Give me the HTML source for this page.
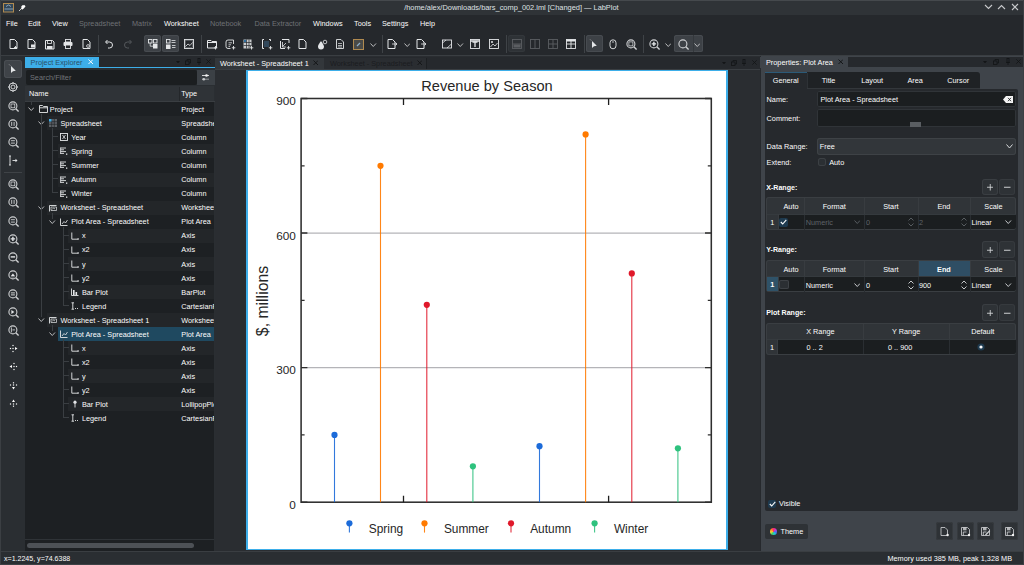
<!DOCTYPE html><html><head><meta charset="utf-8"><style>
html,body{margin:0;padding:0;width:1024px;height:565px;overflow:hidden;background:#202326;}
body{position:relative;font-family:"Liberation Sans", sans-serif;}
.b{position:absolute;}
.t{position:absolute;white-space:nowrap;}
</style></head><body>
<div class="b" style="left:0px;top:0px;width:1024px;height:15px;background:#2f3337;"></div>
<div class="b" style="left:0px;top:0px;width:1024px;height:1px;background:#45494d;"></div>
<div class="b" style="left:0px;top:0px;width:1px;height:565px;background:#3b3f43;"></div>
<svg class="b" style="left:3px;top:3px;" width="12" height="10" viewBox="0 0 12 10"><rect x="0.5" y="0.5" width="10" height="8.5" fill="#31475a" stroke="#b08a50" stroke-width="1"/><path d="M1.5 6 L10 6 M3 3.5 L5.5 2 L8 3.5" stroke="#9fb8cc" stroke-width="0.8" fill="none"/></svg>
<svg class="b" style="left:18px;top:3px;" width="8" height="9" viewBox="0 0 8 9"><path d="M3.5 6 L6.8 2.5 M4 2.8 L6 5.2" stroke="#fff" stroke-width="2.2"/><path d="M1 8 L3.5 5.5" stroke="#ddd" stroke-width="0.9"/></svg>
<div class="t" style="left:311.40px;width:400px;text-align:center;top:2.40px;line-height:12px;font-size:7.42px;color:#dfe1e3;font-weight:normal">/home/alex/Downloads/bars_comp_002.lml [Changed] — LabPlot</div>
<svg class="b" style="left:984px;top:4px;" width="9" height="6" viewBox="0 0 9 6"><path d="M1 1 L4.5 4.5 L8 1" stroke="#c8cacc" stroke-width="1.1" fill="none"/></svg>
<svg class="b" style="left:997px;top:4px;" width="9" height="6" viewBox="0 0 9 6"><path d="M1 5 L4.5 1.5 L8 5" stroke="#c8cacc" stroke-width="1.1" fill="none"/></svg>
<svg class="b" style="left:1011px;top:3px;" width="8" height="8" viewBox="0 0 8 8"><path d="M1 1 L7 7 M7 1 L1 7" stroke="#c8cacc" stroke-width="1.1"/></svg>
<div class="b" style="left:1px;top:15px;width:1023px;height:40px;background:#25282c;"></div>
<div class="t" style="left:6px;top:18.00px;line-height:12px;font-size:7.3px;color:#fcfcfc;font-weight:normal;">File</div>
<div class="t" style="left:28px;top:18.00px;line-height:12px;font-size:7.3px;color:#fcfcfc;font-weight:normal;">Edit</div>
<div class="t" style="left:52px;top:18.00px;line-height:12px;font-size:7.3px;color:#fcfcfc;font-weight:normal;">View</div>
<div class="t" style="left:79px;top:18.00px;line-height:12px;font-size:7.3px;color:#6e7175;font-weight:normal;">Spreadsheet</div>
<div class="t" style="left:132px;top:18.00px;line-height:12px;font-size:7.3px;color:#6e7175;font-weight:normal;">Matrix</div>
<div class="t" style="left:164px;top:18.00px;line-height:12px;font-size:7.3px;color:#fcfcfc;font-weight:normal;">Worksheet</div>
<div class="t" style="left:210px;top:18.00px;line-height:12px;font-size:7.3px;color:#6e7175;font-weight:normal;">Notebook</div>
<div class="t" style="left:254.5px;top:18.00px;line-height:12px;font-size:7.3px;color:#6e7175;font-weight:normal;">Data Extractor</div>
<div class="t" style="left:313px;top:18.00px;line-height:12px;font-size:7.3px;color:#fcfcfc;font-weight:normal;">Windows</div>
<div class="t" style="left:354px;top:18.00px;line-height:12px;font-size:7.3px;color:#fcfcfc;font-weight:normal;">Tools</div>
<div class="t" style="left:382px;top:18.00px;line-height:12px;font-size:7.3px;color:#fcfcfc;font-weight:normal;">Settings</div>
<div class="t" style="left:420px;top:18.00px;line-height:12px;font-size:7.3px;color:#fcfcfc;font-weight:normal;">Help</div>
<div class="b" style="left:1px;top:55px;width:1023px;height:1px;background:#3a3e42;"></div>
<svg class="b" style="left:8.5px;top:39px;" width="10" height="11" viewBox="0 0 10 11"><path d="M1 0.5 H5.5 L8 3 V9.5 H1 Z" stroke="#e4e6e8" stroke-width="1" fill="none"/><path d="M6.5 7 V10 M5 8.5 H8" stroke="#e4e6e8" stroke-width="0.9"/></svg>
<svg class="b" style="left:26.7px;top:39px;" width="10" height="11" viewBox="0 0 10 11"><path d="M1 0.5 H5.5 L8 3 V9.5 H1 Z" stroke="#e4e6e8" stroke-width="1" fill="none"/><rect x="4" y="5.5" width="4" height="3" fill="#e4e6e8"/></svg>
<svg class="b" style="left:45.0px;top:39.5px;" width="10" height="10" viewBox="0 0 10 10"><path d="M0.5 0.5 H7.5 L9 2 V9 H0.5 Z" stroke="#e4e6e8" stroke-width="1" fill="none"/><rect x="2.5" y="0.5" width="4" height="3" stroke="#e4e6e8" stroke-width="0.8" fill="none"/><rect x="2" y="6" width="5.5" height="3" fill="#e4e6e8"/></svg>
<svg class="b" style="left:63px;top:39px;" width="10" height="10" viewBox="0 0 10 10"><rect x="2.5" y="0.5" width="5" height="2.5" stroke="#e4e6e8" stroke-width="0.9" fill="none"/><rect x="0.5" y="3" width="9" height="4" rx="1" fill="#e4e6e8"/><rect x="2.5" y="6" width="5" height="3.5" stroke="#e4e6e8" stroke-width="0.9" fill="#232629"/></svg>
<svg class="b" style="left:81.7px;top:39px;" width="10" height="11" viewBox="0 0 10 11"><path d="M1 0.5 H5.5 L8 3 V9.5 H1 Z" stroke="#e4e6e8" stroke-width="1" fill="none"/><circle cx="6" cy="7" r="1.4" stroke="#e4e6e8" stroke-width="0.8" fill="none"/></svg>
<div class="b" style="left:98px;top:35px;width:1px;height:18px;background:#3f4347;"></div>
<svg class="b" style="left:103.8px;top:39px;" width="10" height="10" viewBox="0 0 10 10"><path d="M2 3 H5.5 A3 3 0 0 1 5.5 9 H4" stroke="#e4e6e8" stroke-width="1" fill="none"/><path d="M3.5 1 L1.5 3 L3.5 5" stroke="#e4e6e8" stroke-width="1" fill="none"/></svg>
<svg class="b" style="left:122.5px;top:39px;" width="10" height="10" viewBox="0 0 10 10"><path d="M8 3 H4.5 A3 3 0 0 0 4.5 9 H6" stroke="#55585c" stroke-width="1" fill="none"/><path d="M6.5 1 L8.5 3 L6.5 5" stroke="#55585c" stroke-width="1" fill="none"/></svg>
<div class="b" style="left:144px;top:35px;width:17px;height:17px;background:#3d4146;border-radius:2.5px;box-shadow:inset 0 0 0 1px #474b50;"></div>
<div class="b" style="left:162px;top:35px;width:17px;height:17px;background:#3d4146;border-radius:2.5px;box-shadow:inset 0 0 0 1px #474b50;"></div>
<svg class="b" style="left:147.5px;top:39px;" width="10" height="10" viewBox="0 0 10 10"><rect x="0.5" y="0.5" width="3.5" height="3.5" stroke="#e4e6e8" stroke-width="0.9" fill="none"/><rect x="5.5" y="0.5" width="3.5" height="3.5" stroke="#e4e6e8" stroke-width="0.9" fill="none"/><rect x="5" y="5" width="4.5" height="4.5" fill="#e4e6e8"/><path d="M2.2 4 V7.2 H5" stroke="#e4e6e8" stroke-width="0.8" fill="none"/></svg>
<svg class="b" style="left:165.5px;top:39px;" width="10" height="10" viewBox="0 0 10 10"><rect x="0.5" y="0.5" width="3.5" height="3.5" stroke="#e4e6e8" stroke-width="0.9" fill="none"/><rect x="0" y="5.5" width="4.5" height="4.5" fill="#e4e6e8"/><path d="M5.5 1.5 H9.5 M5.5 3.5 H9.5 M6 6.5 H9.5 M6 8.5 H9.5" stroke="#e4e6e8" stroke-width="0.8"/></svg>
<svg class="b" style="left:184.2px;top:39px;" width="10" height="10" viewBox="0 0 10 10"><rect x="0.5" y="0.5" width="9" height="9" stroke="#e4e6e8" stroke-width="0.9" fill="none"/><path d="M1.5 7.5 L4 5 L6 6.5 L8.5 3.5" stroke="#e4e6e8" stroke-width="0.8" fill="none"/><rect x="1.5" y="1.5" width="7" height="7" stroke="#e4e6e8" stroke-width="0.5" fill="none" opacity="0.5"/></svg>
<div class="b" style="left:200.5px;top:35px;width:1px;height:18px;background:#3f4347;"></div>
<svg class="b" style="left:206.5px;top:39px;" width="11" height="11" viewBox="0 0 11 11"><path d="M0.5 1.5 H4 L5 2.5 H9.5 V9 H0.5 Z" stroke="#e4e6e8" stroke-width="1" fill="none"/><path d="M0.5 3.5 H9.5" stroke="#e4e6e8" stroke-width="1"/><path d="M8.5 7 V10.5 M6.8 8.8 H10.3" stroke="#e4e6e8" stroke-width="0.9"/></svg>
<svg class="b" style="left:225.2px;top:39px;" width="11" height="11" viewBox="0 0 11 11"><path d="M3 1 H8.5 V5 M3 1 A2 2 0 0 0 1 3 V7.5 A2 2 0 0 0 3 9.5 H5.5" stroke="#e4e6e8" stroke-width="0.9" fill="none"/><path d="M3.5 3.8 H7 M3.5 5.8 H6 M3.5 7.6 H5" stroke="#e4e6e8" stroke-width="0.8"/><path d="M8.5 7 V10.5 M6.8 8.8 H10.3" stroke="#e4e6e8" stroke-width="0.9"/></svg>
<svg class="b" style="left:243.4px;top:39px;" width="11" height="11" viewBox="0 0 11 11"><rect x="0.5" y="0.5" width="8" height="9" fill="#c9cbcd"/><path d="M0.5 3.5 H8.5 M0.5 6.5 H8.5 M3.5 0.5 V9.5 M6 0.5 V9.5" stroke="#25282c" stroke-width="0.7"/><circle cx="2" cy="2" r="1.2" fill="#2b6ea0"/><path d="M8.5 7 V10.5 M6.8 8.8 H10.3" stroke="#25282c" stroke-width="2.2"/><path d="M8.5 7 V10.5 M6.8 8.8 H10.3" stroke="#e4e6e8" stroke-width="0.9"/></svg>
<svg class="b" style="left:261.6px;top:39px;" width="11" height="11" viewBox="0 0 11 11"><path d="M2 0.5 H0.5 V9.5 H2 M7 0.5 H8.5 V2" stroke="#e4e6e8" stroke-width="1" fill="none"/><rect x="2" y="2" width="5" height="6" fill="#31475a"/><path d="M8.5 7 V10.5 M6.8 8.8 H10.3" stroke="#e4e6e8" stroke-width="0.9"/></svg>
<svg class="b" style="left:280px;top:39px;" width="11" height="11" viewBox="0 0 11 11"><path d="M2 0.5 H9 V4 M0.5 2 V9.5 H5" stroke="#e4e6e8" stroke-width="1" fill="none"/><path d="M2.5 3 V8 H6 M3 7 L6 4" stroke="#e4e6e8" stroke-width="0.8" fill="none"/><path d="M8.5 7 V10.5 M6.8 8.8 H10.3" stroke="#e4e6e8" stroke-width="0.9"/></svg>
<svg class="b" style="left:298.2px;top:39px;" width="10" height="11" viewBox="0 0 10 11"><path d="M1 0.5 H5.5 L8 3 V9.5 H1 Z" stroke="#e4e6e8" stroke-width="1" fill="none"/></svg>
<svg class="b" style="left:316.5px;top:39px;" width="11" height="11" viewBox="0 0 11 11"><path d="M4 2 C4 2 1 6 1 7.5 A3 3 0 0 0 7 7.5 C7 6 4 2 4 2 Z" fill="#e4e6e8"/><circle cx="8" cy="3" r="1.8" stroke="#e4e6e8" stroke-width="0.8" fill="none"/></svg>
<svg class="b" style="left:335.1px;top:39px;" width="10" height="10" viewBox="0 0 10 10"><path d="M1.5 0.5 H6 L8.5 3 V9.5 H1.5 Z" stroke="#e4e6e8" stroke-width="0.9" fill="none"/><path d="M3 4.5 H7 M3 6.5 H7 M3 8 H7" stroke="#e4e6e8" stroke-width="0.7"/></svg>
<svg class="b" style="left:353.2px;top:38.5px;" width="11" height="11" viewBox="0 0 11 11"><rect x="0.5" y="0.5" width="10" height="10" fill="#494a48" stroke="#b08a50" stroke-width="1"/><path d="M4 7 L7 4" stroke="#8faec9" stroke-width="1.3"/></svg>
<svg class="b" style="left:370.05px;top:42.5px;" width="6.5" height="4" viewBox="0 0 6.5 4"><path d="M0.5 0.5 L3.25 3.5 L6.0 0.5" stroke="#c8cacc" stroke-width="0.9" fill="none"/></svg>
<div class="b" style="left:381.5px;top:35px;width:1px;height:18px;background:#3f4347;"></div>
<svg class="b" style="left:387px;top:39px;" width="11" height="11" viewBox="0 0 11 11"><path d="M1 0.5 H5.5 L8 3 V9.5 H1 Z" stroke="#e4e6e8" stroke-width="1" fill="none"/><path d="M5 5 H10 M8.5 3.5 L10 5 L8.5 6.5" stroke="#e4e6e8" stroke-width="0.8" fill="none"/></svg>
<svg class="b" style="left:403.55px;top:42.5px;" width="6.5" height="4" viewBox="0 0 6.5 4"><path d="M0.5 0.5 L3.25 3.5 L6.0 0.5" stroke="#c8cacc" stroke-width="0.9" fill="none"/></svg>
<svg class="b" style="left:416.4px;top:39px;" width="11" height="11" viewBox="0 0 11 11"><path d="M1 0.5 H5.5 L8 3 V9.5 H1 Z" stroke="#e4e6e8" stroke-width="1" fill="none"/><path d="M5 5 H10 M8.5 3.5 L10 5 L8.5 6.5" stroke="#e4e6e8" stroke-width="0.8" fill="none"/></svg>
<svg class="b" style="left:441.6px;top:39px;" width="11" height="11" viewBox="0 0 11 11"><rect x="0.5" y="1" width="9" height="8" stroke="#e4e6e8" stroke-width="0.9" fill="none"/><path d="M0.5 4 L4 1 M5 9 L9.5 5" stroke="#e4e6e8" stroke-width="0.8"/></svg>
<svg class="b" style="left:457.25px;top:42.5px;" width="6.5" height="4" viewBox="0 0 6.5 4"><path d="M0.5 0.5 L3.25 3.5 L6.0 0.5" stroke="#c8cacc" stroke-width="0.9" fill="none"/></svg>
<svg class="b" style="left:470px;top:39px;" width="11" height="11" viewBox="0 0 11 11"><rect x="0.5" y="0.5" width="9" height="9" stroke="#e4e6e8" stroke-width="0.9" fill="none"/><path d="M2.5 3 H7.5 M5 3 V8" stroke="#e4e6e8" stroke-width="1.3"/><path d="M0.5 2 H9.5" stroke="#e4e6e8" stroke-width="1.5"/></svg>
<svg class="b" style="left:488.6px;top:39px;" width="11" height="11" viewBox="0 0 11 11"><rect x="0.5" y="0.5" width="9" height="9" stroke="#e4e6e8" stroke-width="0.9" fill="none"/><path d="M1.5 8 L4 5 L6 7 L8.5 4" stroke="#e4e6e8" stroke-width="0.8" fill="none"/><circle cx="3" cy="3" r="1" fill="#e4e6e8"/></svg>
<div class="b" style="left:506px;top:35px;width:1px;height:18px;background:#3f4347;"></div>
<div class="b" style="left:508px;top:35px;width:17px;height:17px;background:#2e3236;border-radius:2.5px;box-shadow:inset 0 0 0 1px #33373b;"></div>
<svg class="b" style="left:511.5px;top:39px;" width="11" height="11" viewBox="0 0 11 11"><rect x="0.5" y="0.5" width="9" height="9" stroke="#5b5e62" stroke-width="0.9" fill="none"/><path d="M0.5 5 H9.5" stroke="#5b5e62" stroke-width="0.9"/><rect x="1.5" y="5.5" width="7" height="3" fill="#5b5e62"/></svg>
<svg class="b" style="left:529.5px;top:39px;" width="11" height="11" viewBox="0 0 11 11"><rect x="0.5" y="0.5" width="9" height="9" stroke="#5b5e62" stroke-width="0.9" fill="none"/><path d="M5 0.5 V9.5" stroke="#5b5e62" stroke-width="0.9"/></svg>
<svg class="b" style="left:547.6px;top:39px;" width="11" height="11" viewBox="0 0 11 11"><rect x="0.5" y="0.5" width="9" height="9" stroke="#5b5e62" stroke-width="0.9" fill="none"/><path d="M5 0.5 V9.5 M0.5 5 H9.5" stroke="#5b5e62" stroke-width="0.9"/></svg>
<svg class="b" style="left:566.2px;top:39px;" width="11" height="11" viewBox="0 0 11 11"><rect x="0.5" y="0.5" width="9" height="9" stroke="#e4e6e8" stroke-width="0.9" fill="none"/><path d="M5 0.5 V9.5 M0.5 5 H9.5" stroke="#e4e6e8" stroke-width="0.9"/><rect x="0.5" y="0.5" width="9" height="2" fill="#e4e6e8"/></svg>
<div class="b" style="left:583.7px;top:35px;width:1px;height:18px;background:#3f4347;"></div>
<div class="b" style="left:586px;top:35px;width:17px;height:17px;background:#3d4146;border-radius:2.5px;box-shadow:inset 0 0 0 1px #474b50;"></div>
<svg class="b" style="left:589.3px;top:39px;" width="11" height="11" viewBox="0 0 11 11"><path d="M3 2 L3 9 L5 7.3 L7.8 6.8 Z" fill="#e4e6e8"/><path d="M1.2 0.5 L2.2 1.5" stroke="#e4e6e8" stroke-width="0.6"/></svg>
<svg class="b" style="left:607.6px;top:39px;" width="11" height="11" viewBox="0 0 11 11"><rect x="2" y="0.8" width="6" height="9" rx="3" stroke="#e4e6e8" stroke-width="0.9" fill="none"/><path d="M5 2 V4" stroke="#e4e6e8" stroke-width="0.8"/></svg>
<svg class="b" style="left:626.3000000000001px;top:39.1px;" width="12" height="12" viewBox="0 0 12 12"><circle cx="4.9" cy="4.9" r="4.0" stroke="#cfd1d3" stroke-width="1.1" fill="none"/><path d="M7.8 7.8 L10.6 10.6" stroke="#cfd1d3" stroke-width="1.4"/><g transform="translate(0.4 0.4)"><rect x="2.5" y="2.5" width="4" height="4" stroke="#e4e6e8" stroke-width="0.7" fill="none"/></g></svg>
<div class="b" style="left:642.9px;top:35px;width:1px;height:18px;background:#3f4347;"></div>
<svg class="b" style="left:649.1px;top:39.1px;" width="12" height="12" viewBox="0 0 12 12"><circle cx="4.9" cy="4.9" r="4.0" stroke="#cfd1d3" stroke-width="1.1" fill="none"/><path d="M7.8 7.8 L10.6 10.6" stroke="#cfd1d3" stroke-width="1.4"/><g transform="translate(0.4 0.4)"><path d="M4.5 2.3 V6.7 M2.3 4.5 H6.7" stroke="#e4e6e8" stroke-width="1.4"/></g></svg>
<svg class="b" style="left:664.65px;top:42.5px;" width="6.5" height="4" viewBox="0 0 6.5 4"><path d="M0.5 0.5 L3.25 3.5 L6.0 0.5" stroke="#c8cacc" stroke-width="0.9" fill="none"/></svg>
<div class="b" style="left:674px;top:35px;width:28.5px;height:17px;background:#3d4146;border-radius:2.5px;box-shadow:inset 0 0 0 1px #474b50;"></div>
<div class="b" style="left:692.5px;top:35px;width:1px;height:17px;background:#34383c;"></div>
<svg class="b" style="left:678.4px;top:39.1px;" width="12" height="12" viewBox="0 0 12 12"><circle cx="4.9" cy="4.9" r="4.0" stroke="#cfd1d3" stroke-width="1.1" fill="none"/><path d="M7.8 7.8 L10.6 10.6" stroke="#cfd1d3" stroke-width="1.4"/><g transform="translate(0.4 0.4)"></g></svg>
<svg class="b" style="left:693.75px;top:42.5px;" width="6.5" height="4" viewBox="0 0 6.5 4"><path d="M0.5 0.5 L3.25 3.5 L6.0 0.5" stroke="#c8cacc" stroke-width="0.9" fill="none"/></svg>
<div class="b" style="left:1px;top:56px;width:1023px;height:495px;background:#2a2e32;"></div>
<div class="b" style="left:4px;top:60px;width:18px;height:17.5px;background:#3f4348;border-radius:3px;box-shadow:inset 0 0 0 1px #4a4e53;"></div>
<svg class="b" style="left:8px;top:64px;" width="11" height="11" viewBox="0 0 11 11"><path d="M3 2 L3 9 L5 7.3 L7.8 6.8 Z" fill="#e4e6e8"/><path d="M1.2 0.5 L2.2 1.5" stroke="#e4e6e8" stroke-width="0.6"/></svg>
<svg class="b" style="left:8px;top:82.2px;" width="11" height="11" viewBox="0 0 11 11"><circle cx="5" cy="5" r="4" stroke="#e4e6e8" stroke-width="0.9" fill="none"/><circle cx="5" cy="5" r="2" stroke="#e4e6e8" stroke-width="0.9" fill="none"/><path d="M5 0 V2 M5 8 V10 M0 5 H2 M8 5 H10" stroke="#e4e6e8" stroke-width="0.9"/></svg>
<svg class="b" style="left:8.1px;top:101.39999999999999px;" width="12" height="12" viewBox="0 0 12 12"><circle cx="4.9" cy="4.9" r="4.0" stroke="#cfd1d3" stroke-width="1.1" fill="none"/><path d="M7.8 7.8 L10.6 10.6" stroke="#cfd1d3" stroke-width="1.4"/><g transform="translate(0.4 0.4)"><rect x="2.6" y="2.6" width="3.8" height="3.8" stroke="#e4e6e8" stroke-width="0.7" fill="none"/></g></svg>
<svg class="b" style="left:8.1px;top:119.1px;" width="12" height="12" viewBox="0 0 12 12"><circle cx="4.9" cy="4.9" r="4.0" stroke="#cfd1d3" stroke-width="1.1" fill="none"/><path d="M7.8 7.8 L10.6 10.6" stroke="#cfd1d3" stroke-width="1.4"/><g transform="translate(0.4 0.4)"><path d="M3.3 2.5 V6.5 M5.7 2.5 V6.5" stroke="#e4e6e8" stroke-width="0.8"/></g></svg>
<svg class="b" style="left:8.1px;top:137.1px;" width="12" height="12" viewBox="0 0 12 12"><circle cx="4.9" cy="4.9" r="4.0" stroke="#cfd1d3" stroke-width="1.1" fill="none"/><path d="M7.8 7.8 L10.6 10.6" stroke="#cfd1d3" stroke-width="1.4"/><g transform="translate(0.4 0.4)"><path d="M2.5 3.3 H6.5 M2.5 5.7 H6.5" stroke="#e4e6e8" stroke-width="0.8"/></g></svg>
<svg class="b" style="left:8px;top:155px;" width="11" height="11" viewBox="0 0 11 11"><path d="M2 1 V10 M1 1 H3 M1 10 H3" stroke="#e4e6e8" stroke-width="0.9"/><path d="M4.5 5.5 H9" stroke="#e4e6e8" stroke-width="0.9"/><path d="M7.5 3.8 L9.5 5.5 L7.5 7.2 Z" fill="#e4e6e8"/></svg>
<div class="b" style="left:4px;top:171.5px;width:18px;height:1px;background:#3f4347;"></div>
<svg class="b" style="left:8.1px;top:178.9px;" width="12" height="12" viewBox="0 0 12 12"><circle cx="4.9" cy="4.9" r="4.0" stroke="#cfd1d3" stroke-width="1.1" fill="none"/><path d="M7.8 7.8 L10.6 10.6" stroke="#cfd1d3" stroke-width="1.4"/><g transform="translate(0.4 0.4)"><rect x="2.6" y="2.6" width="3.8" height="3.8" stroke="#e4e6e8" stroke-width="0.7" fill="none"/></g></svg>
<svg class="b" style="left:8.1px;top:197.1px;" width="12" height="12" viewBox="0 0 12 12"><circle cx="4.9" cy="4.9" r="4.0" stroke="#cfd1d3" stroke-width="1.1" fill="none"/><path d="M7.8 7.8 L10.6 10.6" stroke="#cfd1d3" stroke-width="1.4"/><g transform="translate(0.4 0.4)"><path d="M3.3 2.5 V6.5 M5.7 2.5 V6.5" stroke="#e4e6e8" stroke-width="0.8"/></g></svg>
<svg class="b" style="left:8.1px;top:215.5px;" width="12" height="12" viewBox="0 0 12 12"><circle cx="4.9" cy="4.9" r="4.0" stroke="#cfd1d3" stroke-width="1.1" fill="none"/><path d="M7.8 7.8 L10.6 10.6" stroke="#cfd1d3" stroke-width="1.4"/><g transform="translate(0.4 0.4)"><path d="M2.5 3.3 H6.5 M2.5 5.7 H6.5" stroke="#e4e6e8" stroke-width="0.8"/></g></svg>
<svg class="b" style="left:8.1px;top:233.6px;" width="12" height="12" viewBox="0 0 12 12"><circle cx="4.9" cy="4.9" r="4.0" stroke="#cfd1d3" stroke-width="1.1" fill="none"/><path d="M7.8 7.8 L10.6 10.6" stroke="#cfd1d3" stroke-width="1.4"/><g transform="translate(0.4 0.4)"><path d="M4.5 2.3 V6.7 M2.3 4.5 H6.7" stroke="#e4e6e8" stroke-width="1.4"/></g></svg>
<svg class="b" style="left:8.1px;top:251.9px;" width="12" height="12" viewBox="0 0 12 12"><circle cx="4.9" cy="4.9" r="4.0" stroke="#cfd1d3" stroke-width="1.1" fill="none"/><path d="M7.8 7.8 L10.6 10.6" stroke="#cfd1d3" stroke-width="1.4"/><g transform="translate(0.4 0.4)"><path d="M2.3 4.5 H6.7" stroke="#e4e6e8" stroke-width="1.4"/></g></svg>
<svg class="b" style="left:8.1px;top:270.1px;" width="12" height="12" viewBox="0 0 12 12"><circle cx="4.9" cy="4.9" r="4.0" stroke="#cfd1d3" stroke-width="1.1" fill="none"/><path d="M7.8 7.8 L10.6 10.6" stroke="#cfd1d3" stroke-width="1.4"/><g transform="translate(0.4 0.4)"><path d="M2.5 5.5 L4.5 3 L6.5 5.5 Z" fill="#e4e6e8"/><path d="M2.5 6.5 H6.5" stroke="#e4e6e8" stroke-width="0.6"/></g></svg>
<svg class="b" style="left:8.1px;top:288.70000000000005px;" width="12" height="12" viewBox="0 0 12 12"><circle cx="4.9" cy="4.9" r="4.0" stroke="#cfd1d3" stroke-width="1.1" fill="none"/><path d="M7.8 7.8 L10.6 10.6" stroke="#cfd1d3" stroke-width="1.4"/><g transform="translate(0.4 0.4)"><path d="M2.5 3.5 H6.5 M2.5 5.5 H6.5" stroke="#e4e6e8" stroke-width="0.9"/></g></svg>
<svg class="b" style="left:8.1px;top:306.90000000000003px;" width="12" height="12" viewBox="0 0 12 12"><circle cx="4.9" cy="4.9" r="4.0" stroke="#cfd1d3" stroke-width="1.1" fill="none"/><path d="M7.8 7.8 L10.6 10.6" stroke="#cfd1d3" stroke-width="1.4"/><g transform="translate(0.4 0.4)"><path d="M3 2.5 L6 4.5 L3 6.5 Z" fill="#e4e6e8"/></g></svg>
<svg class="b" style="left:8.1px;top:324.70000000000005px;" width="12" height="12" viewBox="0 0 12 12"><circle cx="4.9" cy="4.9" r="4.0" stroke="#cfd1d3" stroke-width="1.1" fill="none"/><path d="M7.8 7.8 L10.6 10.6" stroke="#cfd1d3" stroke-width="1.4"/><g transform="translate(0.4 0.4)"><path d="M3 2 V7 M4 4.5 H6.5" stroke="#e4e6e8" stroke-width="0.8"/></g></svg>
<svg class="b" style="left:8.5px;top:343.7px;" width="9" height="9" viewBox="0 0 9 9"><rect x="3.4" y="0.9" width="1.2" height="1.2" fill="#fcfcfc"/><rect x="3.4" y="3.9" width="1.2" height="1.2" fill="#fcfcfc"/><rect x="3.4" y="6.9" width="1.2" height="1.2" fill="#fcfcfc"/><rect x="0.9" y="3.9" width="1.2" height="1.2" fill="#fcfcfc"/><path d="M6 3 L8.5 4.5 L6 6 Z" fill="#fcfcfc"/></svg>
<svg class="b" style="left:8.5px;top:362.3px;" width="9" height="9" viewBox="0 0 9 9"><rect x="4.4" y="0.9" width="1.2" height="1.2" fill="#fcfcfc"/><rect x="4.4" y="3.9" width="1.2" height="1.2" fill="#fcfcfc"/><rect x="4.4" y="6.9" width="1.2" height="1.2" fill="#fcfcfc"/><rect x="6.9" y="3.9" width="1.2" height="1.2" fill="#fcfcfc"/><path d="M3 3 L0.5 4.5 L3 6 Z" fill="#fcfcfc"/></svg>
<svg class="b" style="left:8.5px;top:381.5px;" width="9" height="9" viewBox="0 0 9 9"><rect x="0.9" y="2.4" width="1.2" height="1.2" fill="#fcfcfc"/><rect x="3.9" y="2.4" width="1.2" height="1.2" fill="#fcfcfc"/><rect x="6.9" y="2.4" width="1.2" height="1.2" fill="#fcfcfc"/><rect x="3.9" y="0.20000000000000007" width="1.2" height="1.2" fill="#fcfcfc"/><path d="M3 5 L4.5 7.5 L6 5 Z" fill="#fcfcfc"/></svg>
<svg class="b" style="left:8.5px;top:397.8px;" width="9" height="9" viewBox="0 0 9 9"><rect x="0.9" y="5.4" width="1.2" height="1.2" fill="#fcfcfc"/><rect x="3.9" y="5.4" width="1.2" height="1.2" fill="#fcfcfc"/><rect x="6.9" y="5.4" width="1.2" height="1.2" fill="#fcfcfc"/><rect x="3.9" y="7.6" width="1.2" height="1.2" fill="#fcfcfc"/><path d="M3 4 L4.5 1.5 L6 4 Z" fill="#fcfcfc"/></svg>
<div class="b" style="left:25px;top:56px;width:190px;height:12px;background:#26292d;"></div>
<div class="b" style="left:25px;top:57px;width:73.75px;height:10.5px;background:#3daee9;"></div>
<div class="t" style="left:30.6px;top:56.70px;line-height:12px;font-size:7.3px;color:#2c4f66;font-weight:normal;">Project Explorer</div>
<svg class="b" style="left:87.5px;top:59.3px;" width="5.5" height="5.5" viewBox="0 0 5.5 5.5"><path d="M0.5 0.5 L5 5 M5 0.5 L0.5 5" stroke="#eef8fd" stroke-width="1"/></svg>
<div class="b" style="left:25px;top:67px;width:190px;height:1px;background:#3daee9;"></div>
<svg class="b" style="left:175.7px;top:60.5px;" width="4" height="2.5" viewBox="0 0 4 2.5"><path d="M0 0 H4 L2 2.5 Z" fill="#131517"/></svg>
<svg class="b" style="left:184.5px;top:58.5px;" width="6" height="6" viewBox="0 0 6 6"><rect x="0.5" y="2" width="3.5" height="3.5" stroke="#131517" stroke-width="0.8" fill="none"/><path d="M2 2 V0.5 H5.5 V4 H4" stroke="#131517" stroke-width="0.8" fill="none"/></svg>
<svg class="b" style="left:196.5px;top:58.0px;" width="4" height="7" viewBox="0 0 4 7"><rect x="1" y="0.5" width="2" height="3.8" stroke="#131517" stroke-width="0.8" fill="none"/><path d="M0 4.5 H4 M2 4.5 V7" stroke="#131517" stroke-width="0.8"/></svg>
<svg class="b" style="left:205.5px;top:59.0px;" width="5" height="5" viewBox="0 0 5 5"><path d="M0.3 0.3 L4.7 4.7 M4.7 0.3 L0.3 4.7" stroke="#131517" stroke-width="0.8"/></svg>
<div class="b" style="left:26px;top:69.5px;width:170.5px;height:15.3px;background:#1b1e20;border-radius:2px;"></div>
<div class="t" style="left:30px;top:71.90px;line-height:12px;font-size:7.3px;color:#71757a;font-weight:normal;">Search/Filter</div>
<div class="b" style="left:197px;top:69.5px;width:17.5px;height:15.5px;background:#3b4045;"></div>
<svg class="b" style="left:201px;top:72px;" width="9" height="10" viewBox="0 0 9 10"><path d="M1 3.5 H8" stroke="#e8e8e8" stroke-width="0.9"/><path d="M1 7.2 H8" stroke="#a8aaac" stroke-width="0.8"/><circle cx="5.5" cy="3.5" r="1.3" fill="#f4f4f4"/><circle cx="2.8" cy="7.2" r="1.3" fill="#c8cacc"/></svg>
<div class="b" style="left:25px;top:85.7px;width:189px;height:453px;background:#1d2023;"></div>
<div class="b" style="left:25px;top:85.7px;width:189px;height:15.7px;background:#2f3337;"></div>
<div class="b" style="left:178.8px;top:86.5px;width:1px;height:15px;background:#24272a;"></div>
<div class="b" style="left:25px;top:101.4px;width:189.5px;height:1px;background:#3a3e42;"></div>
<div class="t" style="left:29px;top:88.20px;line-height:12px;font-size:7.3px;color:#fcfcfc;font-weight:normal;">Name</div>
<div class="t" style="left:181.3px;top:88.20px;line-height:12px;font-size:7.3px;color:#fcfcfc;font-weight:normal;">Type</div>
<svg class="b" style="left:27.75px;top:107.275px;" width="6.5" height="4" viewBox="0 0 6.5 4"><path d="M0.5 0.5 L3.25 3.5 L6.0 0.5" stroke="#c8cacc" stroke-width="0.9" fill="none"/></svg>
<svg class="b" style="left:38.5px;top:105.275px;" width="9" height="8" viewBox="0 0 9 8"><path d="M0.5 0.5 H3.5 L4.5 1.5 H8.5 V7.5 H0.5 Z" stroke="#e4e6e8" stroke-width="0.9" fill="none"/><path d="M0.5 2.8 H8.5" stroke="#e4e6e8" stroke-width="0.9"/></svg>
<div class="t" style="left:49.8px;top:103.98px;line-height:12px;font-size:7.3px;color:#fcfcfc;font-weight:normal;">Project</div>
<div class="b" style="left:179px;top:102.25px;width:35px;height:14.05px;overflow:hidden;"><div class="t" style="left:2.3px;top:1.73px;line-height:12px;font-size:7.3px;color:#fcfcfc">Project</div></div>
<div class="b" style="left:47.0px;top:116.3px;width:167.3px;height:14.05px;background:#232629;"></div>
<svg class="b" style="left:38.45px;top:121.325px;" width="6.5" height="4" viewBox="0 0 6.5 4"><path d="M0.5 0.5 L3.25 3.5 L6.0 0.5" stroke="#c8cacc" stroke-width="0.9" fill="none"/></svg>
<svg class="b" style="left:49.2px;top:119.325px;" width="8" height="8" viewBox="0 0 8 8"><rect x="0" y="0" width="8" height="8" fill="#5e6266"/><path d="M0 2.7 H8 M0 5.3 H8 M2.7 0 V8 M5.3 0 V8" stroke="#1d2023" stroke-width="0.6"/><rect x="0" y="0" width="2.5" height="2.5" fill="#3daee9"/></svg>
<div class="t" style="left:60.5px;top:118.03px;line-height:12px;font-size:7.3px;color:#fcfcfc;font-weight:normal;">Spreadsheet</div>
<div class="b" style="left:179px;top:116.30px;width:35px;height:14.05px;overflow:hidden;"><div class="t" style="left:2.3px;top:1.73px;line-height:12px;font-size:7.3px;color:#fcfcfc">Spreadsheet</div></div>
<svg class="b" style="left:59.9px;top:133.375px;" width="8" height="8" viewBox="0 0 8 8"><rect x="0.5" y="0.5" width="7" height="7" stroke="#e4e6e8" stroke-width="0.9" fill="none"/><path d="M2.5 2 L5.5 6 M5.5 2 L2.5 6" stroke="#e4e6e8" stroke-width="0.8"/></svg>
<div class="t" style="left:71.19999999999999px;top:132.07px;line-height:12px;font-size:7.3px;color:#fcfcfc;font-weight:normal;">Year</div>
<div class="b" style="left:179px;top:130.35px;width:35px;height:14.05px;overflow:hidden;"><div class="t" style="left:2.3px;top:1.73px;line-height:12px;font-size:7.3px;color:#fcfcfc">Column</div></div>
<div class="b" style="left:57.7px;top:144.4px;width:156.6px;height:14.05px;background:#232629;"></div>
<svg class="b" style="left:59.9px;top:147.425px;" width="8" height="8" viewBox="0 0 8 8"><path d="M0.5 1 H6 M0.5 2.8 H4 M0.5 4.6 H6 M0.5 6.4 H4" stroke="#e4e6e8" stroke-width="0.9"/><rect x="6" y="6.5" width="1.3" height="1.3" fill="#e4e6e8"/><path d="M0.6 0.5 V7" stroke="#e4e6e8" stroke-width="0.8"/></svg>
<div class="t" style="left:71.19999999999999px;top:146.12px;line-height:12px;font-size:7.3px;color:#fcfcfc;font-weight:normal;">Spring</div>
<div class="b" style="left:179px;top:144.40px;width:35px;height:14.05px;overflow:hidden;"><div class="t" style="left:2.3px;top:1.73px;line-height:12px;font-size:7.3px;color:#fcfcfc">Column</div></div>
<svg class="b" style="left:59.9px;top:161.475px;" width="8" height="8" viewBox="0 0 8 8"><path d="M0.5 1 H6 M0.5 2.8 H4 M0.5 4.6 H6 M0.5 6.4 H4" stroke="#e4e6e8" stroke-width="0.9"/><rect x="6" y="6.5" width="1.3" height="1.3" fill="#e4e6e8"/><path d="M0.6 0.5 V7" stroke="#e4e6e8" stroke-width="0.8"/></svg>
<div class="t" style="left:71.19999999999999px;top:160.17px;line-height:12px;font-size:7.3px;color:#fcfcfc;font-weight:normal;">Summer</div>
<div class="b" style="left:179px;top:158.45px;width:35px;height:14.05px;overflow:hidden;"><div class="t" style="left:2.3px;top:1.73px;line-height:12px;font-size:7.3px;color:#fcfcfc">Column</div></div>
<div class="b" style="left:57.7px;top:172.5px;width:156.6px;height:14.05px;background:#232629;"></div>
<svg class="b" style="left:59.9px;top:175.525px;" width="8" height="8" viewBox="0 0 8 8"><path d="M0.5 1 H6 M0.5 2.8 H4 M0.5 4.6 H6 M0.5 6.4 H4" stroke="#e4e6e8" stroke-width="0.9"/><rect x="6" y="6.5" width="1.3" height="1.3" fill="#e4e6e8"/><path d="M0.6 0.5 V7" stroke="#e4e6e8" stroke-width="0.8"/></svg>
<div class="t" style="left:71.19999999999999px;top:174.22px;line-height:12px;font-size:7.3px;color:#fcfcfc;font-weight:normal;">Autumn</div>
<div class="b" style="left:179px;top:172.50px;width:35px;height:14.05px;overflow:hidden;"><div class="t" style="left:2.3px;top:1.73px;line-height:12px;font-size:7.3px;color:#fcfcfc">Column</div></div>
<svg class="b" style="left:59.9px;top:189.57500000000002px;" width="8" height="8" viewBox="0 0 8 8"><path d="M0.5 1 H6 M0.5 2.8 H4 M0.5 4.6 H6 M0.5 6.4 H4" stroke="#e4e6e8" stroke-width="0.9"/><rect x="6" y="6.5" width="1.3" height="1.3" fill="#e4e6e8"/><path d="M0.6 0.5 V7" stroke="#e4e6e8" stroke-width="0.8"/></svg>
<div class="t" style="left:71.19999999999999px;top:188.28px;line-height:12px;font-size:7.3px;color:#fcfcfc;font-weight:normal;">Winter</div>
<div class="b" style="left:179px;top:186.55px;width:35px;height:14.05px;overflow:hidden;"><div class="t" style="left:2.3px;top:1.73px;line-height:12px;font-size:7.3px;color:#fcfcfc">Column</div></div>
<div class="b" style="left:47.0px;top:200.6px;width:167.3px;height:14.05px;background:#232629;"></div>
<svg class="b" style="left:38.45px;top:205.62500000000003px;" width="6.5" height="4" viewBox="0 0 6.5 4"><path d="M0.5 0.5 L3.25 3.5 L6.0 0.5" stroke="#c8cacc" stroke-width="0.9" fill="none"/></svg>
<svg class="b" style="left:49.2px;top:203.62500000000003px;" width="8" height="8" viewBox="0 0 8 8"><path d="M0.5 7.5 V1.5 H7.5" stroke="#e4e6e8" stroke-width="0.9" fill="none"/><path d="M2 6.5 H7.5 V3 H2 Z" stroke="#e4e6e8" stroke-width="0.7" fill="none"/><path d="M3 5.5 L4.5 4 L6 5" stroke="#e4e6e8" stroke-width="0.7" fill="none"/></svg>
<div class="t" style="left:60.5px;top:202.33px;line-height:12px;font-size:7.3px;color:#fcfcfc;font-weight:normal;">Worksheet - Spreadsheet</div>
<div class="b" style="left:179px;top:200.60px;width:35px;height:14.05px;overflow:hidden;"><div class="t" style="left:2.3px;top:1.73px;line-height:12px;font-size:7.3px;color:#fcfcfc">Worksheet</div></div>
<svg class="b" style="left:49.15px;top:219.675px;" width="6.5" height="4" viewBox="0 0 6.5 4"><path d="M0.5 0.5 L3.25 3.5 L6.0 0.5" stroke="#c8cacc" stroke-width="0.9" fill="none"/></svg>
<svg class="b" style="left:59.9px;top:217.675px;" width="8" height="8" viewBox="0 0 8 8"><path d="M0.5 0.5 V7.5 H7.5" stroke="#e4e6e8" stroke-width="0.9" fill="none"/><path d="M2 6 L4 3.5 L5.5 5 L7.5 2" stroke="#e4e6e8" stroke-width="0.8" fill="none"/></svg>
<div class="t" style="left:71.19999999999999px;top:216.38px;line-height:12px;font-size:7.3px;color:#fcfcfc;font-weight:normal;">Plot Area - Spreadsheet</div>
<div class="b" style="left:179px;top:214.65px;width:35px;height:14.05px;overflow:hidden;"><div class="t" style="left:2.3px;top:1.73px;line-height:12px;font-size:7.3px;color:#fcfcfc">Plot Area</div></div>
<div class="b" style="left:68.4px;top:228.7px;width:145.9px;height:14.05px;background:#232629;"></div>
<svg class="b" style="left:70.6px;top:231.725px;" width="8" height="8" viewBox="0 0 8 8"><path d="M0.8 0.5 V7.2 H7.5" stroke="#e4e6e8" stroke-width="0.9" fill="none"/><rect x="6.5" y="6.3" width="1.2" height="1.2" fill="#e4e6e8"/></svg>
<div class="t" style="left:81.89999999999999px;top:230.42px;line-height:12px;font-size:7.3px;color:#fcfcfc;font-weight:normal;">x</div>
<div class="b" style="left:179px;top:228.70px;width:35px;height:14.05px;overflow:hidden;"><div class="t" style="left:2.3px;top:1.73px;line-height:12px;font-size:7.3px;color:#fcfcfc">Axis</div></div>
<svg class="b" style="left:70.6px;top:245.775px;" width="8" height="8" viewBox="0 0 8 8"><path d="M0.8 0.5 V7.2 H7.5" stroke="#e4e6e8" stroke-width="0.9" fill="none"/><rect x="6.5" y="6.3" width="1.2" height="1.2" fill="#e4e6e8"/></svg>
<div class="t" style="left:81.89999999999999px;top:244.47px;line-height:12px;font-size:7.3px;color:#fcfcfc;font-weight:normal;">x2</div>
<div class="b" style="left:179px;top:242.75px;width:35px;height:14.05px;overflow:hidden;"><div class="t" style="left:2.3px;top:1.73px;line-height:12px;font-size:7.3px;color:#fcfcfc">Axis</div></div>
<div class="b" style="left:68.4px;top:256.8px;width:145.9px;height:14.05px;background:#232629;"></div>
<svg class="b" style="left:70.6px;top:259.825px;" width="8" height="8" viewBox="0 0 8 8"><path d="M0.8 0.5 V7.2 H7.5" stroke="#e4e6e8" stroke-width="0.9" fill="none"/><rect x="6.5" y="6.3" width="1.2" height="1.2" fill="#e4e6e8"/></svg>
<div class="t" style="left:81.89999999999999px;top:258.52px;line-height:12px;font-size:7.3px;color:#fcfcfc;font-weight:normal;">y</div>
<div class="b" style="left:179px;top:256.80px;width:35px;height:14.05px;overflow:hidden;"><div class="t" style="left:2.3px;top:1.73px;line-height:12px;font-size:7.3px;color:#fcfcfc">Axis</div></div>
<svg class="b" style="left:70.6px;top:273.875px;" width="8" height="8" viewBox="0 0 8 8"><path d="M0.8 0.5 V7.2 H7.5" stroke="#e4e6e8" stroke-width="0.9" fill="none"/><rect x="6.5" y="6.3" width="1.2" height="1.2" fill="#e4e6e8"/></svg>
<div class="t" style="left:81.89999999999999px;top:272.57px;line-height:12px;font-size:7.3px;color:#fcfcfc;font-weight:normal;">y2</div>
<div class="b" style="left:179px;top:270.85px;width:35px;height:14.05px;overflow:hidden;"><div class="t" style="left:2.3px;top:1.73px;line-height:12px;font-size:7.3px;color:#fcfcfc">Axis</div></div>
<div class="b" style="left:68.4px;top:284.9px;width:145.9px;height:14.05px;background:#232629;"></div>
<svg class="b" style="left:70.6px;top:287.92499999999995px;" width="8" height="8" viewBox="0 0 8 8"><path d="M0.5 0.5 V7.5 H7.5" stroke="#e4e6e8" stroke-width="0.9" fill="none"/><rect x="2" y="2" width="1.6" height="5" fill="#e4e6e8"/><rect x="4.5" y="4" width="1.6" height="3" fill="#e4e6e8"/></svg>
<div class="t" style="left:81.89999999999999px;top:286.62px;line-height:12px;font-size:7.3px;color:#fcfcfc;font-weight:normal;">Bar Plot</div>
<div class="b" style="left:179px;top:284.90px;width:35px;height:14.05px;overflow:hidden;"><div class="t" style="left:2.3px;top:1.73px;line-height:12px;font-size:7.3px;color:#fcfcfc">BarPlot</div></div>
<svg class="b" style="left:70.6px;top:301.975px;" width="9" height="8" viewBox="0 0 9 8"><path d="M0.5 0.8 H3 M1.8 0.8 V7.2 M0.5 7.2 H3" stroke="#e4e6e8" stroke-width="0.9"/><path d="M4 6.5 H5 M6 6.5 H7" stroke="#e4e6e8" stroke-width="0.9"/></svg>
<div class="t" style="left:81.89999999999999px;top:300.68px;line-height:12px;font-size:7.3px;color:#fcfcfc;font-weight:normal;">Legend</div>
<div class="b" style="left:179px;top:298.95px;width:35px;height:14.05px;overflow:hidden;"><div class="t" style="left:2.3px;top:1.73px;line-height:12px;font-size:7.3px;color:#fcfcfc">CartesianPlotLegend</div></div>
<div class="b" style="left:47.0px;top:313.0px;width:167.3px;height:14.05px;background:#232629;"></div>
<svg class="b" style="left:38.45px;top:318.025px;" width="6.5" height="4" viewBox="0 0 6.5 4"><path d="M0.5 0.5 L3.25 3.5 L6.0 0.5" stroke="#c8cacc" stroke-width="0.9" fill="none"/></svg>
<svg class="b" style="left:49.2px;top:316.025px;" width="8" height="8" viewBox="0 0 8 8"><path d="M0.5 7.5 V1.5 H7.5" stroke="#e4e6e8" stroke-width="0.9" fill="none"/><path d="M2 6.5 H7.5 V3 H2 Z" stroke="#e4e6e8" stroke-width="0.7" fill="none"/><path d="M3 5.5 L4.5 4 L6 5" stroke="#e4e6e8" stroke-width="0.7" fill="none"/></svg>
<div class="t" style="left:60.5px;top:314.72px;line-height:12px;font-size:7.3px;color:#fcfcfc;font-weight:normal;">Worksheet - Spreadsheet 1</div>
<div class="b" style="left:179px;top:313.00px;width:35px;height:14.05px;overflow:hidden;"><div class="t" style="left:2.3px;top:1.73px;line-height:12px;font-size:7.3px;color:#fcfcfc">Worksheet</div></div>
<div class="b" style="left:57.7px;top:327.05px;width:156.6px;height:14.05px;background:#1f4960;"></div>
<svg class="b" style="left:49.15px;top:332.075px;" width="6.5" height="4" viewBox="0 0 6.5 4"><path d="M0.5 0.5 L3.25 3.5 L6.0 0.5" stroke="#c8cacc" stroke-width="0.9" fill="none"/></svg>
<svg class="b" style="left:59.9px;top:330.075px;" width="8" height="8" viewBox="0 0 8 8"><path d="M0.5 0.5 V7.5 H7.5" stroke="#e4e6e8" stroke-width="0.9" fill="none"/><path d="M2 6 L4 3.5 L5.5 5 L7.5 2" stroke="#e4e6e8" stroke-width="0.8" fill="none"/></svg>
<div class="t" style="left:71.19999999999999px;top:328.77px;line-height:12px;font-size:7.3px;color:#fcfcfc;font-weight:normal;">Plot Area - Spreadsheet</div>
<div class="b" style="left:179px;top:327.05px;width:35px;height:14.05px;overflow:hidden;"><div class="t" style="left:2.3px;top:1.73px;line-height:12px;font-size:7.3px;color:#fcfcfc">Plot Area</div></div>
<div class="b" style="left:68.4px;top:341.1px;width:145.9px;height:14.05px;background:#232629;"></div>
<svg class="b" style="left:70.6px;top:344.125px;" width="8" height="8" viewBox="0 0 8 8"><path d="M0.8 0.5 V7.2 H7.5" stroke="#e4e6e8" stroke-width="0.9" fill="none"/><rect x="6.5" y="6.3" width="1.2" height="1.2" fill="#e4e6e8"/></svg>
<div class="t" style="left:81.89999999999999px;top:342.82px;line-height:12px;font-size:7.3px;color:#fcfcfc;font-weight:normal;">x</div>
<div class="b" style="left:179px;top:341.10px;width:35px;height:14.05px;overflow:hidden;"><div class="t" style="left:2.3px;top:1.73px;line-height:12px;font-size:7.3px;color:#fcfcfc">Axis</div></div>
<svg class="b" style="left:70.6px;top:358.17499999999995px;" width="8" height="8" viewBox="0 0 8 8"><path d="M0.8 0.5 V7.2 H7.5" stroke="#e4e6e8" stroke-width="0.9" fill="none"/><rect x="6.5" y="6.3" width="1.2" height="1.2" fill="#e4e6e8"/></svg>
<div class="t" style="left:81.89999999999999px;top:356.87px;line-height:12px;font-size:7.3px;color:#fcfcfc;font-weight:normal;">x2</div>
<div class="b" style="left:179px;top:355.15px;width:35px;height:14.05px;overflow:hidden;"><div class="t" style="left:2.3px;top:1.73px;line-height:12px;font-size:7.3px;color:#fcfcfc">Axis</div></div>
<div class="b" style="left:68.4px;top:369.2px;width:145.9px;height:14.05px;background:#232629;"></div>
<svg class="b" style="left:70.6px;top:372.22499999999997px;" width="8" height="8" viewBox="0 0 8 8"><path d="M0.8 0.5 V7.2 H7.5" stroke="#e4e6e8" stroke-width="0.9" fill="none"/><rect x="6.5" y="6.3" width="1.2" height="1.2" fill="#e4e6e8"/></svg>
<div class="t" style="left:81.89999999999999px;top:370.92px;line-height:12px;font-size:7.3px;color:#fcfcfc;font-weight:normal;">y</div>
<div class="b" style="left:179px;top:369.20px;width:35px;height:14.05px;overflow:hidden;"><div class="t" style="left:2.3px;top:1.73px;line-height:12px;font-size:7.3px;color:#fcfcfc">Axis</div></div>
<svg class="b" style="left:70.6px;top:386.275px;" width="8" height="8" viewBox="0 0 8 8"><path d="M0.8 0.5 V7.2 H7.5" stroke="#e4e6e8" stroke-width="0.9" fill="none"/><rect x="6.5" y="6.3" width="1.2" height="1.2" fill="#e4e6e8"/></svg>
<div class="t" style="left:81.89999999999999px;top:384.97px;line-height:12px;font-size:7.3px;color:#fcfcfc;font-weight:normal;">y2</div>
<div class="b" style="left:179px;top:383.25px;width:35px;height:14.05px;overflow:hidden;"><div class="t" style="left:2.3px;top:1.73px;line-height:12px;font-size:7.3px;color:#fcfcfc">Axis</div></div>
<div class="b" style="left:68.4px;top:397.3px;width:145.9px;height:14.05px;background:#232629;"></div>
<svg class="b" style="left:70.6px;top:400.325px;" width="8" height="8" viewBox="0 0 8 8"><circle cx="4" cy="2.2" r="1.6" fill="#e4e6e8"/><path d="M4 3 V7.5" stroke="#e4e6e8" stroke-width="0.9"/></svg>
<div class="t" style="left:81.89999999999999px;top:399.02px;line-height:12px;font-size:7.3px;color:#fcfcfc;font-weight:normal;">Bar Plot</div>
<div class="b" style="left:179px;top:397.30px;width:35px;height:14.05px;overflow:hidden;"><div class="t" style="left:2.3px;top:1.73px;line-height:12px;font-size:7.3px;color:#fcfcfc">LollipopPlot</div></div>
<svg class="b" style="left:70.6px;top:414.375px;" width="9" height="8" viewBox="0 0 9 8"><path d="M0.5 0.8 H3 M1.8 0.8 V7.2 M0.5 7.2 H3" stroke="#e4e6e8" stroke-width="0.9"/><path d="M4 6.5 H5 M6 6.5 H7" stroke="#e4e6e8" stroke-width="0.9"/></svg>
<div class="t" style="left:81.89999999999999px;top:413.07px;line-height:12px;font-size:7.3px;color:#fcfcfc;font-weight:normal;">Legend</div>
<div class="b" style="left:179px;top:411.35px;width:35px;height:14.05px;overflow:hidden;"><div class="t" style="left:2.3px;top:1.73px;line-height:12px;font-size:7.3px;color:#fcfcfc">CartesianPlotLegend</div></div>
<div class="b" style="left:30.5px;top:101.5px;width:1px;height:3.78px;background:#3a3e42;"></div>
<div class="b" style="left:41px;top:114.28px;width:1px;height:202.75px;background:#3a3e42;"></div>
<div class="b" style="left:52px;top:128.32px;width:1px;height:64.75px;background:#3a3e42;"></div>
<div class="b" style="left:52px;top:136.18px;width:6px;height:1px;background:#3a3e42;"></div>
<div class="b" style="left:52px;top:150.23px;width:6px;height:1px;background:#3a3e42;"></div>
<div class="b" style="left:52px;top:164.28px;width:6px;height:1px;background:#3a3e42;"></div>
<div class="b" style="left:52px;top:178.33px;width:6px;height:1px;background:#3a3e42;"></div>
<div class="b" style="left:52px;top:192.38px;width:6px;height:1px;background:#3a3e42;"></div>
<div class="b" style="left:52px;top:212.63px;width:1px;height:6.05px;background:#3a3e42;"></div>
<div class="b" style="left:62.7px;top:226.68px;width:1px;height:78.8px;background:#3a3e42;"></div>
<div class="b" style="left:63px;top:234.53px;width:5.5px;height:1px;background:#3a3e42;"></div>
<div class="b" style="left:63px;top:248.58px;width:5.5px;height:1px;background:#3a3e42;"></div>
<div class="b" style="left:63px;top:262.62px;width:5.5px;height:1px;background:#3a3e42;"></div>
<div class="b" style="left:63px;top:276.68px;width:5.5px;height:1px;background:#3a3e42;"></div>
<div class="b" style="left:63px;top:290.72px;width:5.5px;height:1px;background:#3a3e42;"></div>
<div class="b" style="left:63px;top:304.78px;width:5.5px;height:1px;background:#3a3e42;"></div>
<div class="b" style="left:52px;top:325.02px;width:1px;height:6.05px;background:#3a3e42;"></div>
<div class="b" style="left:62.7px;top:339.07px;width:1px;height:78.8px;background:#3a3e42;"></div>
<div class="b" style="left:63px;top:346.93px;width:5.5px;height:1px;background:#3a3e42;"></div>
<div class="b" style="left:63px;top:360.97px;width:5.5px;height:1px;background:#3a3e42;"></div>
<div class="b" style="left:63px;top:375.02px;width:5.5px;height:1px;background:#3a3e42;"></div>
<div class="b" style="left:63px;top:389.07px;width:5.5px;height:1px;background:#3a3e42;"></div>
<div class="b" style="left:63px;top:403.12px;width:5.5px;height:1px;background:#3a3e42;"></div>
<div class="b" style="left:63px;top:417.18px;width:5.5px;height:1px;background:#3a3e42;"></div>
<div class="b" style="left:25px;top:539.2px;width:189px;height:1px;background:#2f3337;"></div>
<div class="b" style="left:25px;top:540.2px;width:189px;height:10.5px;background:#1d2023;"></div>
<div class="b" style="left:27px;top:543px;width:167px;height:5px;background:#4d5156;border-radius:2.5px;"></div>
<div class="b" style="left:215px;top:56px;width:545px;height:495px;background:#2a2d31;"></div>
<div class="b" style="left:215px;top:57px;width:545px;height:12px;background:#26292d;"></div>
<div class="b" style="left:215px;top:57.5px;width:108.75px;height:11px;background:#33373b;"></div>
<div class="t" style="left:220px;top:57.50px;line-height:12px;font-size:7.3px;color:#fcfcfc;font-weight:normal;">Worksheet - Spreadsheet 1</div>
<svg class="b" style="left:312.8px;top:60px;" width="5.5" height="5.5" viewBox="0 0 5.5 5.5"><path d="M0.5 0.5 L5 5 M5 0.5 L0.5 5" stroke="#141618" stroke-width="1"/></svg>
<div class="b" style="left:324px;top:57.5px;width:102px;height:11px;background:#2a2d31;"></div>
<div class="t" style="left:330px;top:57.50px;line-height:12px;font-size:7.3px;color:#1a1c1f;font-weight:normal;">Worksheet - Spreadsheet</div>
<svg class="b" style="left:416.8px;top:60px;" width="5.5" height="5.5" viewBox="0 0 5.5 5.5"><path d="M0.5 0.5 L5 5 M5 0.5 L0.5 5" stroke="#141618" stroke-width="1"/></svg>
<div class="b" style="left:426px;top:57.5px;width:1px;height:11px;background:#1d2023;"></div>
<svg class="b" style="left:721.5px;top:61.6px;" width="4" height="2.5" viewBox="0 0 4 2.5"><path d="M0 0 H4 L2 2.5 Z" fill="#131517"/></svg>
<svg class="b" style="left:730.5px;top:59.6px;" width="6" height="6" viewBox="0 0 6 6"><rect x="0.5" y="2" width="3.5" height="3.5" stroke="#131517" stroke-width="0.8" fill="none"/><path d="M2 2 V0.5 H5.5 V4 H4" stroke="#131517" stroke-width="0.8" fill="none"/></svg>
<svg class="b" style="left:742px;top:59.1px;" width="4" height="7" viewBox="0 0 4 7"><rect x="1" y="0.5" width="2" height="3.8" stroke="#131517" stroke-width="0.8" fill="none"/><path d="M0 4.5 H4 M2 4.5 V7" stroke="#131517" stroke-width="0.8"/></svg>
<svg class="b" style="left:751.5px;top:60.1px;" width="5" height="5" viewBox="0 0 5 5"><path d="M0.3 0.3 L4.7 4.7 M4.7 0.3 L0.3 4.7" stroke="#131517" stroke-width="0.8"/></svg>
<div class="b" style="left:215px;top:68.5px;width:545px;height:1px;background:#3a3e42;"></div>
<div class="b" style="left:246px;top:69.5px;width:482px;height:480.5px;background:#3daee9;"></div>
<div class="b" style="left:248px;top:71px;width:478px;height:477.8px;background:#ffffff;"></div>
<svg class="b" style="left:0px;top:0px;pointer-events:none;" width="1024" height="565" viewBox="0 0 1024 565"><path d="M301.1 367.63 H711.3" stroke="#b4b4b8" stroke-width="1.25"/><path d="M301.1 233.07 H711.3" stroke="#b4b4b8" stroke-width="1.25"/><rect x="301.1" y="98.5" width="410.20" height="403.70" stroke="#2e2e2e" stroke-width="1.55" fill="none"/><path d="M301.1 502.20 h6.3 M711.3 502.20 h-6.3" stroke="#2e2e2e" stroke-width="1.4"/><path d="M301.1 367.63 h6.3 M711.3 367.63 h-6.3" stroke="#2e2e2e" stroke-width="1.4"/><path d="M301.1 233.07 h6.3 M711.3 233.07 h-6.3" stroke="#2e2e2e" stroke-width="1.4"/><path d="M301.1 98.50 h6.3 M711.3 98.50 h-6.3" stroke="#2e2e2e" stroke-width="1.4"/><path d="M301.1 434.92 h3.5 M711.3 434.92 h-3.5" stroke="#2e2e2e" stroke-width="1.3"/><path d="M301.1 300.35 h3.5 M711.3 300.35 h-3.5" stroke="#2e2e2e" stroke-width="1.3"/><path d="M301.1 165.78 h3.5 M711.3 165.78 h-3.5" stroke="#2e2e2e" stroke-width="1.3"/><path d="M403.50 502.2 v-6.5 M403.50 98.5 v6.5" stroke="#1e1e1e" stroke-width="1.3"/><path d="M608.60 502.2 v-6.5 M608.60 98.5 v6.5" stroke="#1e1e1e" stroke-width="1.3"/><path d="M334.5 502.2 V434.92" stroke="#1c6bd9" stroke-width="1.1" opacity="0.9"/><circle cx="334.5" cy="434.92" r="3.1" fill="#1c6bd9"/><path d="M380.5 502.2 V165.78" stroke="#ff7a00" stroke-width="1.1" opacity="0.9"/><circle cx="380.5" cy="165.78" r="3.1" fill="#ff7a00"/><path d="M426.8 502.2 V304.84" stroke="#e0182a" stroke-width="1.1" opacity="0.9"/><circle cx="426.8" cy="304.84" r="3.1" fill="#e0182a"/><path d="M472.9 502.2 V466.32" stroke="#2ec27e" stroke-width="1.1" opacity="0.9"/><circle cx="472.9" cy="466.32" r="3.1" fill="#2ec27e"/><path d="M539.5 502.2 V446.13" stroke="#1c6bd9" stroke-width="1.1" opacity="0.9"/><circle cx="539.5" cy="446.13" r="3.1" fill="#1c6bd9"/><path d="M585.6 502.2 V134.38" stroke="#ff7a00" stroke-width="1.1" opacity="0.9"/><circle cx="585.6" cy="134.38" r="3.1" fill="#ff7a00"/><path d="M631.8 502.2 V273.44" stroke="#e0182a" stroke-width="1.1" opacity="0.9"/><circle cx="631.8" cy="273.44" r="3.1" fill="#e0182a"/><path d="M677.9 502.2 V448.37" stroke="#2ec27e" stroke-width="1.1" opacity="0.9"/><circle cx="677.9" cy="448.37" r="3.1" fill="#2ec27e"/><path d="M349.4 523.5 V532.6" stroke="#1c6bd9" stroke-width="1.1" opacity="0.9"/><circle cx="349.4" cy="523.3" r="3.1" fill="#1c6bd9"/><path d="M424.5 523.5 V532.6" stroke="#ff7a00" stroke-width="1.1" opacity="0.9"/><circle cx="424.5" cy="523.3" r="3.1" fill="#ff7a00"/><path d="M511 523.5 V532.6" stroke="#e0182a" stroke-width="1.1" opacity="0.9"/><circle cx="511" cy="523.3" r="3.1" fill="#e0182a"/><path d="M594.6 523.5 V532.6" stroke="#2ec27e" stroke-width="1.1" opacity="0.9"/><circle cx="594.6" cy="523.3" r="3.1" fill="#2ec27e"/></svg>
<div class="t" style="left:-4.20px;width:300px;text-align:right;top:95.20px;line-height:12px;font-size:11.8px;color:#262626;font-weight:normal">900</div>
<div class="t" style="left:-4.20px;width:300px;text-align:right;top:229.77px;line-height:12px;font-size:11.8px;color:#262626;font-weight:normal">600</div>
<div class="t" style="left:-4.20px;width:300px;text-align:right;top:364.33px;line-height:12px;font-size:11.8px;color:#262626;font-weight:normal">300</div>
<div class="t" style="left:-4.20px;width:300px;text-align:right;top:498.90px;line-height:12px;font-size:11.8px;color:#262626;font-weight:normal">0</div>
<div class="t" style="left:337.00px;width:300px;text-align:center;top:80.00px;line-height:12px;font-size:14.6px;color:#262626;font-weight:normal">Revenue by Season</div>
<div class="t" style="left:202.5px;top:292.7px;width:120px;text-align:center;line-height:16px;font-size:15.8px;color:#262626;transform:rotate(-90deg);">$, millions</div>
<div class="t" style="left:368.8px;top:523.30px;line-height:12px;font-size:11.9px;color:#262626;font-weight:normal;">Spring</div>
<div class="t" style="left:443.9px;top:523.30px;line-height:12px;font-size:11.9px;color:#262626;font-weight:normal;">Summer</div>
<div class="t" style="left:530.2px;top:523.30px;line-height:12px;font-size:11.9px;color:#262626;font-weight:normal;">Autumn</div>
<div class="t" style="left:613.9px;top:523.30px;line-height:12px;font-size:11.9px;color:#262626;font-weight:normal;">Winter</div>
<div class="b" style="left:760px;top:56px;width:264px;height:495px;background:#3f444a;"></div>
<div class="b" style="left:759.5px;top:56px;width:1px;height:495px;background:#26292d;"></div>
<div class="b" style="left:760px;top:57px;width:264px;height:10px;background:#26292d;"></div>
<div class="b" style="left:760.4px;top:57px;width:88px;height:10.5px;background:#3f444a;"></div>
<div class="t" style="left:766px;top:56.60px;line-height:12px;font-size:7.3px;color:#fcfcfc;font-weight:normal;">Properties: Plot Area</div>
<svg class="b" style="left:837.6px;top:59.3px;" width="5.5" height="5.5" viewBox="0 0 5.5 5.5"><path d="M0.5 0.5 L5 5 M5 0.5 L0.5 5" stroke="#141618" stroke-width="1"/></svg>
<svg class="b" style="left:982.5px;top:60.7px;" width="4" height="2.5" viewBox="0 0 4 2.5"><path d="M0 0 H4 L2 2.5 Z" fill="#131517"/></svg>
<svg class="b" style="left:993px;top:58.7px;" width="6" height="6" viewBox="0 0 6 6"><rect x="0.5" y="2" width="3.5" height="3.5" stroke="#131517" stroke-width="0.8" fill="none"/><path d="M2 2 V0.5 H5.5 V4 H4" stroke="#131517" stroke-width="0.8" fill="none"/></svg>
<svg class="b" style="left:1005.5px;top:58.2px;" width="4" height="7" viewBox="0 0 4 7"><rect x="1" y="0.5" width="2" height="3.8" stroke="#131517" stroke-width="0.8" fill="none"/><path d="M0 4.5 H4 M2 4.5 V7" stroke="#131517" stroke-width="0.8"/></svg>
<svg class="b" style="left:1015.5px;top:59.2px;" width="5" height="5" viewBox="0 0 5 5"><path d="M0.3 0.3 L4.7 4.7 M4.7 0.3 L0.3 4.7" stroke="#131517" stroke-width="0.8"/></svg>
<div class="b" style="left:764.75px;top:72px;width:215px;height:17px;background:#1f2225;border-radius:2px 3px 0 0;"></div>
<div class="b" style="left:764.75px;top:72px;width:42px;height:17px;background:#26292d;border-radius:2px 2px 0 0;"></div>
<div class="b" style="left:764.75px;top:72px;width:42px;height:1px;background:#2b5a78;"></div>
<div class="b" style="left:806.6px;top:73px;width:1px;height:15px;background:#2e3236;"></div>
<div class="t" style="left:755.70px;width:60px;text-align:center;top:74.90px;line-height:12px;font-size:7.3px;color:#fcfcfc;font-weight:normal">General</div>
<div class="t" style="left:798.60px;width:60px;text-align:center;top:74.90px;line-height:12px;font-size:7.3px;color:#fcfcfc;font-weight:normal">Title</div>
<div class="t" style="left:842.10px;width:60px;text-align:center;top:74.90px;line-height:12px;font-size:7.3px;color:#fcfcfc;font-weight:normal">Layout</div>
<div class="t" style="left:885.10px;width:60px;text-align:center;top:74.90px;line-height:12px;font-size:7.3px;color:#fcfcfc;font-weight:normal">Area</div>
<div class="t" style="left:928.20px;width:60px;text-align:center;top:74.90px;line-height:12px;font-size:7.3px;color:#fcfcfc;font-weight:normal">Cursor</div>
<div class="b" style="left:764.5px;top:88.5px;width:253.5px;height:422px;background:#26292d;border-radius:0 2px 2px 2px;"></div>
<div class="b" style="left:806.6px;top:88px;width:173px;height:1px;background:#33373b;"></div>
<div class="t" style="left:766.6px;top:94.00px;line-height:12px;font-size:7.3px;color:#fcfcfc;font-weight:normal;">Name:</div>
<div class="b" style="left:816.5px;top:90.8px;width:199px;height:16.2px;background:#1b1e20;border-radius:2px;box-shadow:inset 0 0 0 1px #303438;"></div>
<div class="t" style="left:820.5px;top:93.70px;line-height:12px;font-size:7.3px;color:#fcfcfc;font-weight:normal;">Plot Area - Spreadsheet</div>
<svg class="b" style="left:1003px;top:95.5px;" width="10" height="7" viewBox="0 0 10 7"><path d="M0 3.5 L3 0 H10 V7 H3 Z" fill="#f4f4f4"/><path d="M5 1.8 L8 5.2 M8 1.8 L5 5.2" stroke="#26292d" stroke-width="0.9"/></svg>
<div class="t" style="left:766.6px;top:112.70px;line-height:12px;font-size:7.3px;color:#fcfcfc;font-weight:normal;">Comment:</div>
<div class="b" style="left:816.5px;top:109px;width:199px;height:17.5px;background:#1b1e20;border-radius:2px;box-shadow:inset 0 0 0 1px #303438;"></div>
<div class="b" style="left:910px;top:121.5px;width:11px;height:5px;background:#5a5e62;"></div>
<div class="t" style="left:766.6px;top:141.40px;line-height:12px;font-size:7.3px;color:#fcfcfc;font-weight:normal;">Data Range:</div>
<div class="b" style="left:817px;top:138px;width:199px;height:16.5px;background:#32363a;border-radius:3px;box-shadow:inset 0 0 0 1px #3e4246;"></div>
<div class="t" style="left:819.8px;top:141.20px;line-height:12px;font-size:7.3px;color:#fcfcfc;font-weight:normal;">Free</div>
<svg class="b" style="left:1006.0px;top:144.45px;" width="7" height="4.5" viewBox="0 0 7 4.5"><path d="M0.5 0.5 L3.5 4.0 L6.5 0.5" stroke="#d8dadc" stroke-width="1" fill="none"/></svg>
<div class="t" style="left:766.6px;top:157.30px;line-height:12px;font-size:7.3px;color:#fcfcfc;font-weight:normal;">Extend:</div>
<div class="b" style="left:817.6px;top:157.9px;width:8.6px;height:8.5px;background:#2b2f33;border-radius:2.5px;box-shadow:inset 0 0 0 1px #3c4044;"></div>
<div class="t" style="left:829.2px;top:157.30px;line-height:12px;font-size:7.3px;color:#fcfcfc;font-weight:normal;">Auto</div>
<div class="t" style="left:766.2px;top:181.70px;line-height:12px;font-size:7.1px;color:#fcfcfc;font-weight:bold;">X-Range:</div>
<div class="b" style="left:982px;top:179.0px;width:15.8px;height:16.3px;background:#2e3236;border-radius:3px;box-shadow:inset 0 0 0 1px #3a3e42;"></div>
<div class="b" style="left:999px;top:179.0px;width:16px;height:16.3px;background:#2e3236;border-radius:3px;box-shadow:inset 0 0 0 1px #363a3e;"></div>
<svg class="b" style="left:986.5px;top:184.2px;" width="6.5" height="6.5" viewBox="0 0 6.5 6.5"><path d="M3.25 0 V6.5 M0 3.25 H6.5" stroke="#e0e2e4" stroke-width="0.8"/></svg>
<svg class="b" style="left:1004px;top:184.2px;" width="6.5" height="6.5" viewBox="0 0 6.5 6.5"><path d="M0 3.25 H6.5" stroke="#e0e2e4" stroke-width="0.9"/></svg>
<div class="b" style="left:766.4px;top:197.3px;width:250.10000000000002px;height:32.79999999999998px;background:#303438;border-radius:3px;box-shadow:inset 0 0 0 1px #3a3e42;"></div>
<div class="b" style="left:778px;top:214.3px;width:237.5px;height:14.799999999999983px;background:#1b1e20;border-radius:0 0 2px 0;"></div>
<div class="t" style="left:741.00px;width:100px;text-align:center;top:201.10px;line-height:12px;font-size:7.3px;color:#fcfcfc;font-weight:normal">Auto</div>
<div class="t" style="left:784.20px;width:100px;text-align:center;top:201.10px;line-height:12px;font-size:7.3px;color:#fcfcfc;font-weight:normal">Format</div>
<div class="t" style="left:840.95px;width:100px;text-align:center;top:201.10px;line-height:12px;font-size:7.3px;color:#fcfcfc;font-weight:normal">Start</div>
<div class="t" style="left:893.95px;width:100px;text-align:center;top:201.10px;line-height:12px;font-size:7.3px;color:#fcfcfc;font-weight:normal">End</div>
<div class="t" style="left:943.45px;width:100px;text-align:center;top:201.10px;line-height:12px;font-size:7.3px;color:#fcfcfc;font-weight:normal">Scale</div>
<div class="b" style="left:804px;top:198.3px;width:1px;height:16.0px;background:#383c40;"></div>
<div class="b" style="left:804px;top:214.3px;width:1px;height:15.299999999999983px;background:#2a2e32;"></div>
<div class="b" style="left:864.4px;top:198.3px;width:1px;height:16.0px;background:#383c40;"></div>
<div class="b" style="left:864.4px;top:214.3px;width:1px;height:15.299999999999983px;background:#2a2e32;"></div>
<div class="b" style="left:917.5px;top:198.3px;width:1px;height:16.0px;background:#383c40;"></div>
<div class="b" style="left:917.5px;top:214.3px;width:1px;height:15.299999999999983px;background:#2a2e32;"></div>
<div class="b" style="left:970.4px;top:198.3px;width:1px;height:16.0px;background:#383c40;"></div>
<div class="b" style="left:970.4px;top:214.3px;width:1px;height:15.299999999999983px;background:#2a2e32;"></div>
<div class="b" style="left:766.9px;top:213.8px;width:249.10000000000002px;height:1px;background:#353a3e;"></div>
<div class="b" style="left:777.5px;top:214.3px;width:1px;height:15.299999999999983px;background:#383c40;"></div>
<div class="t" style="left:762.20px;width:20px;text-align:center;top:216.90px;line-height:12px;font-size:7.3px;color:#fcfcfc;font-weight:normal">1</div>
<div class="b" style="left:779px;top:217.5px;width:9px;height:9px;background:#1e3a4f;border-radius:2px;"></div>
<svg class="b" style="left:780px;top:219px;" width="7" height="6" viewBox="0 0 7 6"><path d="M0.8 3 L2.7 5 L6.3 0.8" stroke="#fcfcfc" stroke-width="1.1" fill="none"/></svg>
<div class="t" style="left:805.8px;top:217.00px;line-height:12px;font-size:7.3px;color:#5f6368;font-weight:normal;">Numeric</div>
<svg class="b" style="left:853.75px;top:220.0px;" width="6.5" height="4" viewBox="0 0 6.5 4"><path d="M0.5 0.5 L3.25 3.5 L6.0 0.5" stroke="#5f6368" stroke-width="0.9" fill="none"/></svg>
<div class="t" style="left:866px;top:217.00px;line-height:12px;font-size:7.3px;color:#5f6368;font-weight:normal;">0</div>
<svg class="b" style="left:908px;top:217.3px;" width="6" height="10" viewBox="0 0 6 10"><path d="M0.5 3.5 L3 1 L5.5 3.5 M0.5 6.5 L3 9 L5.5 6.5" stroke="#5f6368" stroke-width="0.9" fill="none"/></svg>
<div class="t" style="left:919px;top:217.00px;line-height:12px;font-size:7.3px;color:#5f6368;font-weight:normal;">2</div>
<svg class="b" style="left:961px;top:217.3px;" width="6" height="10" viewBox="0 0 6 10"><path d="M0.5 3.5 L3 1 L5.5 3.5 M0.5 6.5 L3 9 L5.5 6.5" stroke="#5f6368" stroke-width="0.9" fill="none"/></svg>
<div class="t" style="left:971.5px;top:217.00px;line-height:12px;font-size:7.3px;color:#fcfcfc;font-weight:normal;">Linear</div>
<svg class="b" style="left:1005.25px;top:220.0px;" width="6.5" height="4" viewBox="0 0 6.5 4"><path d="M0.5 0.5 L3.25 3.5 L6.0 0.5" stroke="#d8dadc" stroke-width="0.9" fill="none"/></svg>
<div class="t" style="left:766.2px;top:244.10px;line-height:12px;font-size:7.1px;color:#fcfcfc;font-weight:bold;">Y-Range:</div>
<div class="b" style="left:982px;top:241.4px;width:15.8px;height:16.3px;background:#2e3236;border-radius:3px;box-shadow:inset 0 0 0 1px #3a3e42;"></div>
<div class="b" style="left:999px;top:241.4px;width:16px;height:16.3px;background:#2e3236;border-radius:3px;box-shadow:inset 0 0 0 1px #363a3e;"></div>
<svg class="b" style="left:986.5px;top:246.6px;" width="6.5" height="6.5" viewBox="0 0 6.5 6.5"><path d="M3.25 0 V6.5 M0 3.25 H6.5" stroke="#e0e2e4" stroke-width="0.8"/></svg>
<svg class="b" style="left:1004px;top:246.6px;" width="6.5" height="6.5" viewBox="0 0 6.5 6.5"><path d="M0 3.25 H6.5" stroke="#e0e2e4" stroke-width="0.9"/></svg>
<div class="b" style="left:766.4px;top:260px;width:250.10000000000002px;height:32.39999999999998px;background:#303438;border-radius:3px;box-shadow:inset 0 0 0 1px #3a3e42;"></div>
<div class="b" style="left:778px;top:276.8px;width:237.5px;height:14.599999999999966px;background:#1b1e20;border-radius:0 0 2px 0;"></div>
<div class="t" style="left:741.00px;width:100px;text-align:center;top:263.70px;line-height:12px;font-size:7.3px;color:#fcfcfc;font-weight:normal">Auto</div>
<div class="t" style="left:784.20px;width:100px;text-align:center;top:263.70px;line-height:12px;font-size:7.3px;color:#fcfcfc;font-weight:normal">Format</div>
<div class="t" style="left:840.95px;width:100px;text-align:center;top:263.70px;line-height:12px;font-size:7.3px;color:#fcfcfc;font-weight:normal">Start</div>
<div class="b" style="left:917.5px;top:261px;width:52.89999999999998px;height:15.800000000000011px;background:#2f4e64;"></div>
<div class="t" style="left:893.95px;width:100px;text-align:center;top:263.70px;line-height:12px;font-size:7.3px;color:#fcfcfc;font-weight:bold">End</div>
<div class="t" style="left:943.45px;width:100px;text-align:center;top:263.70px;line-height:12px;font-size:7.3px;color:#fcfcfc;font-weight:normal">Scale</div>
<div class="b" style="left:804px;top:261px;width:1px;height:15.800000000000011px;background:#383c40;"></div>
<div class="b" style="left:804px;top:276.8px;width:1px;height:15.099999999999966px;background:#2a2e32;"></div>
<div class="b" style="left:864.4px;top:261px;width:1px;height:15.800000000000011px;background:#383c40;"></div>
<div class="b" style="left:864.4px;top:276.8px;width:1px;height:15.099999999999966px;background:#2a2e32;"></div>
<div class="b" style="left:917.5px;top:261px;width:1px;height:15.800000000000011px;background:#383c40;"></div>
<div class="b" style="left:917.5px;top:276.8px;width:1px;height:15.099999999999966px;background:#2a2e32;"></div>
<div class="b" style="left:970.4px;top:261px;width:1px;height:15.800000000000011px;background:#383c40;"></div>
<div class="b" style="left:970.4px;top:276.8px;width:1px;height:15.099999999999966px;background:#2a2e32;"></div>
<div class="b" style="left:766.9px;top:276.3px;width:249.10000000000002px;height:1px;background:#353a3e;"></div>
<div class="b" style="left:767.4px;top:276.8px;width:10.600000000000023px;height:14.599999999999966px;background:#2f5268;"></div>
<div class="b" style="left:777.5px;top:276.8px;width:1px;height:15.099999999999966px;background:#383c40;"></div>
<div class="t" style="left:762.20px;width:20px;text-align:center;top:279.30px;line-height:12px;font-size:7.3px;color:#fcfcfc;font-weight:bold">1</div>
<div class="b" style="left:779px;top:279.8px;width:9.5px;height:9.5px;background:#2b2f33;border-radius:2px;box-shadow:inset 0 0 0 1px #3e4246;"></div>
<div class="t" style="left:805.8px;top:279.70px;line-height:12px;font-size:7.3px;color:#fcfcfc;font-weight:normal;">Numeric</div>
<svg class="b" style="left:853.75px;top:282.7px;" width="6.5" height="4" viewBox="0 0 6.5 4"><path d="M0.5 0.5 L3.25 3.5 L6.0 0.5" stroke="#d8dadc" stroke-width="0.9" fill="none"/></svg>
<div class="t" style="left:866px;top:279.70px;line-height:12px;font-size:7.3px;color:#fcfcfc;font-weight:normal;">0</div>
<svg class="b" style="left:908px;top:280px;" width="6" height="10" viewBox="0 0 6 10"><path d="M0.5 3.5 L3 1 L5.5 3.5 M0.5 6.5 L3 9 L5.5 6.5" stroke="#d8dadc" stroke-width="0.9" fill="none"/></svg>
<div class="t" style="left:919px;top:279.70px;line-height:12px;font-size:7.3px;color:#fcfcfc;font-weight:normal;">900</div>
<svg class="b" style="left:961px;top:280px;" width="6" height="10" viewBox="0 0 6 10"><path d="M0.5 3.5 L3 1 L5.5 3.5 M0.5 6.5 L3 9 L5.5 6.5" stroke="#d8dadc" stroke-width="0.9" fill="none"/></svg>
<div class="t" style="left:971.5px;top:279.70px;line-height:12px;font-size:7.3px;color:#fcfcfc;font-weight:normal;">Linear</div>
<svg class="b" style="left:1005.25px;top:282.7px;" width="6.5" height="4" viewBox="0 0 6.5 4"><path d="M0.5 0.5 L3.25 3.5 L6.0 0.5" stroke="#d8dadc" stroke-width="0.9" fill="none"/></svg>
<div class="t" style="left:766.2px;top:306.80px;line-height:12px;font-size:7.1px;color:#fcfcfc;font-weight:bold;">Plot Range:</div>
<div class="b" style="left:982.4px;top:304.4px;width:15.8px;height:16.3px;background:#2e3236;border-radius:3px;box-shadow:inset 0 0 0 1px #3a3e42;"></div>
<div class="b" style="left:999.4px;top:304.4px;width:16px;height:16.3px;background:#2e3236;border-radius:3px;box-shadow:inset 0 0 0 1px #363a3e;"></div>
<svg class="b" style="left:986.9px;top:309.59999999999997px;" width="6.5" height="6.5" viewBox="0 0 6.5 6.5"><path d="M3.25 0 V6.5 M0 3.25 H6.5" stroke="#e0e2e4" stroke-width="0.8"/></svg>
<svg class="b" style="left:1004.4px;top:309.59999999999997px;" width="6.5" height="6.5" viewBox="0 0 6.5 6.5"><path d="M0 3.25 H6.5" stroke="#e0e2e4" stroke-width="0.9"/></svg>
<div class="b" style="left:766.4px;top:322.7px;width:250.10000000000002px;height:32.30000000000001px;background:#303438;border-radius:3px;box-shadow:inset 0 0 0 1px #3a3e42;"></div>
<div class="b" style="left:777.5px;top:339.2px;width:238.0px;height:14.800000000000011px;background:#1b1e20;border-radius:0 0 2px 0;"></div>
<div class="t" style="left:770.40px;width:100px;text-align:center;top:326.25px;line-height:12px;font-size:7.3px;color:#fcfcfc;font-weight:normal">X Range</div>
<div class="t" style="left:856.15px;width:100px;text-align:center;top:326.25px;line-height:12px;font-size:7.3px;color:#fcfcfc;font-weight:normal">Y Range</div>
<div class="t" style="left:932.75px;width:100px;text-align:center;top:326.25px;line-height:12px;font-size:7.3px;color:#fcfcfc;font-weight:normal">Default</div>
<div class="b" style="left:863.3px;top:323.7px;width:1px;height:15.5px;background:#383c40;"></div>
<div class="b" style="left:863.3px;top:339.2px;width:1px;height:15.300000000000011px;background:#2a2e32;"></div>
<div class="b" style="left:949px;top:323.7px;width:1px;height:15.5px;background:#383c40;"></div>
<div class="b" style="left:949px;top:339.2px;width:1px;height:15.300000000000011px;background:#2a2e32;"></div>
<div class="b" style="left:766.9px;top:338.7px;width:249.10000000000002px;height:1px;background:#353a3e;"></div>
<div class="b" style="left:777.0px;top:339.2px;width:1px;height:15.300000000000011px;background:#383c40;"></div>
<div class="t" style="left:761.95px;width:20px;text-align:center;top:341.80px;line-height:12px;font-size:7.3px;color:#fcfcfc;font-weight:normal">1</div>
<div class="t" style="left:806.5px;top:342.00px;line-height:12px;font-size:7.3px;color:#fcfcfc;font-weight:normal;">0 .. 2</div>
<div class="t" style="left:888px;top:342.00px;line-height:12px;font-size:7.3px;color:#fcfcfc;font-weight:normal;">0 .. 900</div>
<svg class="b" style="left:976.5px;top:343.2px;" width="8" height="8" viewBox="0 0 8 8"><circle cx="4" cy="4" r="3.6" fill="#1e3a4f"/><circle cx="4" cy="4" r="1.6" fill="#fcfcfc"/></svg>
<div class="b" style="left:767.8px;top:499.6px;width:8.5px;height:8.5px;background:#1e3a4f;border-radius:2px;"></div>
<svg class="b" style="left:768.5px;top:501px;" width="7" height="6" viewBox="0 0 7 6"><path d="M0.8 3 L2.7 5 L6.3 0.8" stroke="#fcfcfc" stroke-width="1.1" fill="none"/></svg>
<div class="t" style="left:779px;top:498.30px;line-height:12px;font-size:7.3px;color:#fcfcfc;font-weight:normal;">Visible</div>
<div class="b" style="left:765px;top:523.6px;width:42.8px;height:15.6px;background:#2e3236;border-radius:2px;"></div>
<div class="b" style="left:769.5px;top:527.8px;width:7px;height:7px;background:conic-gradient(#ff2a6d, #c23bd4, #4a6cf0, #21c7d9, #3ed36a, #f6d532, #ff8a1f, #ff2a6d);border-radius:50%;"></div>
<div class="t" style="left:780.5px;top:526.10px;line-height:12px;font-size:7.3px;color:#fcfcfc;font-weight:normal;">Theme</div>
<div class="b" style="left:935.6px;top:522.4px;width:17.799999999999955px;height:17.9px;background:#2e3236;border-radius:2.5px;box-shadow:inset 0 0 0 1px #363a3e;"></div>
<svg class="b" style="left:940.0px;top:526.5px;" width="10" height="10" viewBox="0 0 10 10"><path d="M1 0.5 H5 L7.5 3 V8.5 H1 Z" stroke="#d4d6d8" stroke-width="0.8" fill="none"/><circle cx="7.6" cy="8" r="1.2" fill="#f0f0f0"/></svg>
<div class="b" style="left:956.6px;top:522.4px;width:17.0px;height:17.9px;background:#2e3236;border-radius:2.5px;box-shadow:inset 0 0 0 1px #363a3e;"></div>
<svg class="b" style="left:960.6px;top:526.5px;" width="10" height="10" viewBox="0 0 10 10"><path d="M0.5 0.5 H6.5 L8.5 2.5 V8.5 H0.5 Z" stroke="#d4d6d8" stroke-width="0.8" fill="none"/><rect x="2" y="0.5" width="3.5" height="2.8" fill="#d4d6d8" opacity="0.8"/><path d="M2.3 8.5 V5 H5.5" stroke="#d4d6d8" stroke-width="0.8" fill="none"/><circle cx="8" cy="8" r="1.2" fill="#f4f4f4"/></svg>
<div class="b" style="left:977.2px;top:522.4px;width:17.0px;height:17.9px;background:#2e3236;border-radius:2.5px;box-shadow:inset 0 0 0 1px #363a3e;"></div>
<svg class="b" style="left:981.2px;top:526.5px;" width="10" height="10" viewBox="0 0 10 10"><path d="M0.5 0.5 H6.5 L8.5 2.5 V8.5 H0.5 Z" stroke="#d4d6d8" stroke-width="0.8" fill="none"/><rect x="2" y="0.5" width="3.5" height="2.8" fill="#d4d6d8" opacity="0.8"/><path d="M2.3 8.5 V5 H5.5" stroke="#d4d6d8" stroke-width="0.8" fill="none"/><path d="M4.5 8 L8.8 3.7" stroke="#d4d6d8" stroke-width="1.2"/></svg>
<div class="b" style="left:1000.6px;top:522.4px;width:17.399999999999977px;height:17.9px;background:#2e3236;border-radius:2.5px;box-shadow:inset 0 0 0 1px #363a3e;"></div>
<svg class="b" style="left:1004.8px;top:526.5px;" width="10" height="10" viewBox="0 0 10 10"><path d="M0.5 0.5 H6.5 L8.5 2.5 V8.5 H0.5 Z" stroke="#d4d6d8" stroke-width="0.8" fill="none"/><rect x="2" y="0.5" width="3.5" height="2.8" fill="#d4d6d8" opacity="0.8"/><path d="M2.3 8.5 V5 H5.5" stroke="#d4d6d8" stroke-width="0.8" fill="none"/><circle cx="8" cy="8" r="1.2" fill="#f4f4f4"/></svg>
<div class="b" style="left:0px;top:550.8px;width:1024px;height:14.2px;background:#2a2e32;"></div>
<div class="b" style="left:0px;top:550.8px;width:1024px;height:1px;background:#3a3e42;"></div>
<div class="b" style="left:0px;top:550.8px;width:1px;height:14.2px;background:#3b3f43;"></div>
<div class="b" style="left:0px;top:563.6px;width:1024px;height:1.4px;background:#3d4145;"></div>
<div class="b" style="left:1022.8px;top:0px;width:1.2px;height:565px;background:#3b3f43;"></div>
<div class="t" style="left:4px;top:553.00px;line-height:12px;font-size:7.05px;color:#fcfcfc;font-weight:normal;">x=1.2245, y=74.6388</div>
<div class="t" style="left:712.00px;width:300px;text-align:right;top:553.00px;line-height:12px;font-size:7.3px;color:#fcfcfc;font-weight:normal">Memory used 385 MB, peak 1,328 MB</div>
</body></html>
